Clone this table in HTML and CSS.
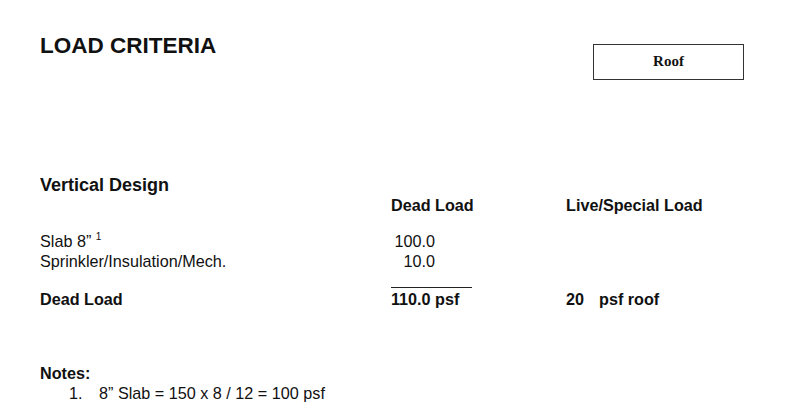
FILE: index.html
```html
<!DOCTYPE html>
<html>
<head>
<meta charset="utf-8">
<link rel="stylesheet" href="styles.css">
</head>
<body>
<div class="page">
  <header class="head">
    <h1 class="title">LOAD CRITERIA</h1>
    <div class="tag">Roof</div>
  </header>

  <section class="design">
    <h2 class="section-title">Vertical Design</h2>
    <div class="table">
      <div class="cell"></div>
      <div class="cell th">Dead Load</div>
      <div class="cell th">Live/Special Load</div>

      <div class="cell items">
        <div>Slab 8” <sup class="ref">1</sup></div>
        <div>Sprinkler/Insulation/Mech.</div>
      </div>
      <div class="cell items">
        <div class="num">100.0</div>
        <div class="num">10.0</div>
      </div>
      <div class="cell items"></div>

      <div class="cell th total">Dead Load</div>
      <div class="cell th total"><span class="sum">110.0 psf</span></div>
      <div class="cell th total"><span class="val">20</span>psf roof</div>
    </div>
  </section>

  <section class="notes">
    <div class="notes-title">Notes:</div>
    <ol class="note-list">
      <li class="note"><span class="note-num">1.</span><span>8” Slab = 150 x 8 / 12 = 100 psf</span></li>
    </ol>
  </section>
</div>
</body>
</html>
```

FILE: styles.css
```css
* { box-sizing: border-box; }
html, body { margin: 0; padding: 0; background: #fff; }
body {
  font-family: "Liberation Sans", Arial, sans-serif;
  color: #111;
  width: 794px;
  height: 412px;
  overflow: hidden;
}
.page {
  padding: 33px 50px 0 40px;
}
.head {
  display: flex;
  justify-content: space-between;
  align-items: flex-start;
}
.title {
  margin: 0;
  font-size: 22.5px;
  line-height: 26px;
  font-weight: bold;
}
.tag {
  margin-top: 11px;
  width: 151px;
  height: 36px;
  border: 1.5px solid #333;
  font-family: "Liberation Serif", "Times New Roman", serif;
  font-weight: bold;
  font-size: 15px;
  display: flex;
  align-items: center;
  justify-content: center;
  padding-bottom: 2px;
}
.design {
  margin-top: 94px;
}
.section-title {
  margin: 0;
  font-size: 18px;
  line-height: 22px;
  font-weight: bold;
}
.table {
  display: grid;
  grid-template-columns: 351px 175px auto;
  margin-top: -1px;
}
.cell {
  font-size: 16.2px;
  line-height: 20px;
}
.th { font-weight: bold; }
.items {
  margin-top: 16px;
  line-height: 20px;
}
.num {
  width: 44px;
  text-align: right;
}
.ref {
  font-size: 10px;
  vertical-align: 7px;
  line-height: 0;
}
.total {
  margin-top: 18px;
}
.sum {
  display: inline-block;
  width: 81px;
  border-top: 1px solid #222;
  padding-top: 1px;
  margin-top: -3px;
}
.val {
  display: inline-block;
  width: 33px;
}
.notes {
  margin-top: 55px;
}
.notes-title {
  font-size: 16.2px;
  line-height: 19px;
  font-weight: bold;
}
.note-list {
  margin: 0;
  padding: 0 0 0 29px;
  list-style: none;
}
.note {
  display: flex;
  font-size: 16.2px;
  line-height: 20px;
}
.note-num {
  width: 30px;
}
```
